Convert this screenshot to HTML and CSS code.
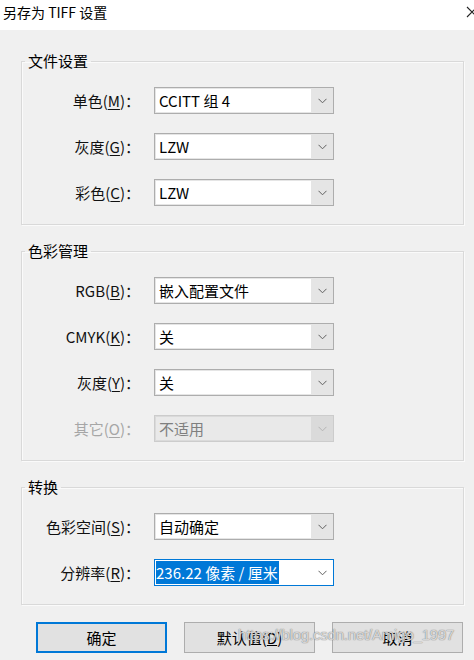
FILE: index.html
```html
<!DOCTYPE html>
<html lang="zh-CN">
<head>
<meta charset="utf-8">
<title>另存为 TIFF 设置</title>
<link rel="stylesheet" href="styles.css">
</head>
<body>
<div class="dialog">
  <div class="titlebar">
    <span class="title">另存为 TIFF 设置</span>
    <svg class="close" width="12" height="12" viewBox="0 0 12 12"><path d="M1 1 L11 11 M11 1 L1 11" stroke="#222" stroke-width="1.1" fill="none"/></svg>
  </div>
  <div class="content">
    <fieldset class="group">
      <legend>文件设置</legend>
      <div class="row"><span class="label">单色(<u>M</u>)：</span><div class="combo"><span class="value">CCITT 组 4</span><span class="btn"><svg width="9" height="6" viewBox="0 0 9 6"><path d="M0.5 0.8 L4.5 4.8 L8.5 0.8" stroke="#606060" stroke-width="1" fill="none"/></svg></span></div></div>
      <div class="row"><span class="label">灰度(<u>G</u>)：</span><div class="combo"><span class="value">LZW</span><span class="btn"><svg width="9" height="6" viewBox="0 0 9 6"><path d="M0.5 0.8 L4.5 4.8 L8.5 0.8" stroke="#606060" stroke-width="1" fill="none"/></svg></span></div></div>
      <div class="row"><span class="label">彩色(<u>C</u>)：</span><div class="combo"><span class="value">LZW</span><span class="btn"><svg width="9" height="6" viewBox="0 0 9 6"><path d="M0.5 0.8 L4.5 4.8 L8.5 0.8" stroke="#606060" stroke-width="1" fill="none"/></svg></span></div></div>
    </fieldset>
    <fieldset class="group">
      <legend>色彩管理</legend>
      <div class="row"><span class="label">RGB(<u>B</u>)：</span><div class="combo"><span class="value">嵌入配置文件</span><span class="btn"><svg width="9" height="6" viewBox="0 0 9 6"><path d="M0.5 0.8 L4.5 4.8 L8.5 0.8" stroke="#606060" stroke-width="1" fill="none"/></svg></span></div></div>
      <div class="row"><span class="label">CMYK(<u>K</u>)：</span><div class="combo"><span class="value">关</span><span class="btn"><svg width="9" height="6" viewBox="0 0 9 6"><path d="M0.5 0.8 L4.5 4.8 L8.5 0.8" stroke="#606060" stroke-width="1" fill="none"/></svg></span></div></div>
      <div class="row"><span class="label">灰度(<u>Y</u>)：</span><div class="combo"><span class="value">关</span><span class="btn"><svg width="9" height="6" viewBox="0 0 9 6"><path d="M0.5 0.8 L4.5 4.8 L8.5 0.8" stroke="#606060" stroke-width="1" fill="none"/></svg></span></div></div>
      <div class="row disabled"><span class="label">其它(<u>O</u>)：</span><div class="combo"><span class="value">不适用</span><span class="btn"><svg width="9" height="6" viewBox="0 0 9 6"><path d="M0.5 0.8 L4.5 4.8 L8.5 0.8" stroke="#b4b4b4" stroke-width="1" fill="none"/></svg></span></div></div>
    </fieldset>
    <fieldset class="group">
      <legend>转换</legend>
      <div class="row"><span class="label">色彩空间(<u>S</u>)：</span><div class="combo"><span class="value">自动确定</span><span class="btn"><svg width="9" height="6" viewBox="0 0 9 6"><path d="M0.5 0.8 L4.5 4.8 L8.5 0.8" stroke="#606060" stroke-width="1" fill="none"/></svg></span></div></div>
      <div class="row"><span class="label">分辨率(<u>R</u>)：</span><div class="combo focused"><span class="value"><span class="sel">236.22 像素 / 厘米</span></span><span class="btn"><svg width="9" height="6" viewBox="0 0 9 6"><path d="M0.5 0.8 L4.5 4.8 L8.5 0.8" stroke="#606060" stroke-width="1" fill="none"/></svg></span></div></div>
    </fieldset>
    <div class="buttons">
      <button class="button default">确定</button>
      <button class="button">默认值(<u>D</u>)</button>
      <button class="button">取消</button>
    </div>
  </div>
  <div class="watermark">https://blog.csdn.net/Amigo_1997</div>
</div>
</body>
</html>
```

FILE: styles.css
```css
html, body {
  margin: 0;
  padding: 0;
}
body {
  width: 474px;
  height: 660px;
  overflow: hidden;
  background: #f0f0f0;
  font-family: "Noto Sans CJK SC", "Noto Sans", sans-serif;
  font-size: 15px;
  color: #000;
}
.dialog {
  position: relative;
  width: 474px;
  height: 660px;
  overflow: hidden;
}
.titlebar {
  height: 30px;
  background: #fff;
  display: flex;
  align-items: center;
  justify-content: space-between;
  padding-left: 3px;
  box-sizing: border-box;
}
.title {
  font-size: 14px;
  line-height: 20px;
  margin-top: -6px;
}
.close {
  margin-right: -4px;
  margin-top: -7px;
}
.content {
  padding: 21px 10px 0 21px;
  display: flex;
  flex-direction: column;
}
.group {
  margin: 0 0 16px 0;
  padding: 16px 0 18px 0;
  border: 1px solid #d9d9d9;
  box-shadow: 1px 1px 0 #fafafa inset, 1px 1px 0 #fafafa;
  display: flex;
  flex-direction: column;
  gap: 19px;
}
.group legend {
  margin-left: 3px;
  padding: 0 3px;
  font-size: 15px;
  line-height: 20px;
  color: #000;
}
.row {
  display: flex;
  align-items: center;
  height: 27px;
}
.label {
  width: 118px;
  text-align: right;
  margin-right: 14px;
  color: #111;
  white-space: nowrap;
  line-height: 20px;
}
.label u {
  text-underline-offset: 2px;
}
.combo {
  width: 180px;
  height: 27px;
  box-sizing: border-box;
  border: 1px solid #adadad;
  background: #e5e5e5;
  display: flex;
  padding: 1px 0 1px 1px;
}
.combo .value {
  flex: 1;
  background: #fff;
  padding-left: 3px;
  line-height: 23px;
  white-space: nowrap;
  display: flex;
  align-items: center;
}
.combo .btn {
  width: 22px;
  display: flex;
  align-items: center;
  justify-content: center;
}
.disabled .label {
  color: #a6a6a6;
}
.disabled .combo {
  border-color: #cccccc;
  background: #dadada;
}
.disabled .combo .value {
  background: #e9e9e9;
  color: #7f7f7f;
}
.combo.focused {
  border-color: #0078d7;
  background: #fff;
  padding: 1px 0 1px 0;
}
.combo.focused .value {
  padding-left: 1px;
}
.sel {
  background: #0078d7;
  color: #fff;
  line-height: 23px;
  padding-right: 1px;
}
.buttons {
  display: flex;
  gap: 17px;
  padding-left: 15px;
  margin-top: 1px;
}
.button {
  width: 131px;
  height: 31px;
  box-sizing: border-box;
  border: 1px solid #adadad;
  background: #e1e1e1;
  font-family: "Noto Sans CJK SC", "Noto Sans", sans-serif;
  font-size: 15px;
  color: #000;
  padding: 0;
}
.button.default {
  border: 2px solid #0078d7;
}
.watermark {
  position: absolute;
  left: 238px;
  top: 626px;
  font-family: "Liberation Sans", Arial, sans-serif;
  font-size: 15px;
  color: rgba(255, 255, 255, 0.7);
  text-shadow: 0 0 1px rgba(110, 110, 110, 0.9), 0 0 1px rgba(110, 110, 110, 0.6);
  white-space: nowrap;
  letter-spacing: -0.2px;
  pointer-events: none;
}
```
